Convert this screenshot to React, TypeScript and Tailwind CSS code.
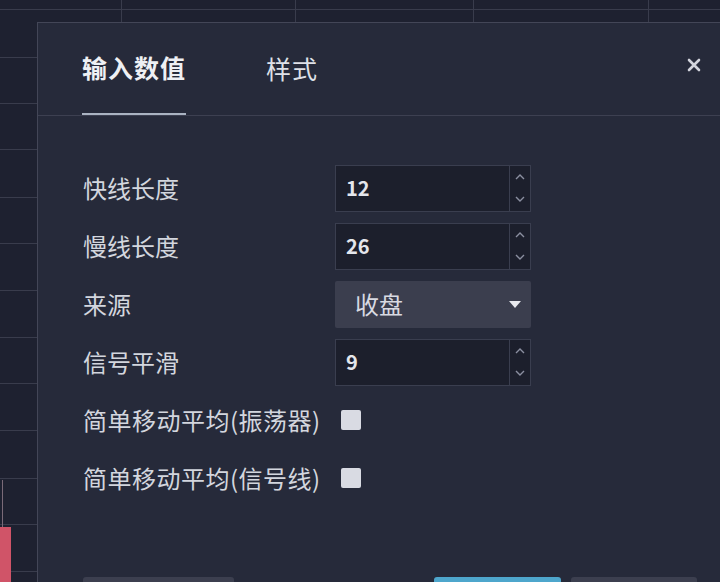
import React from "react";

const FONT = { fontFamily: '"Noto Sans CJK SC", "Noto Sans", sans-serif' };

// background chart grid (only edges show around the dialog)
const H_LINES = [9, 57, 103, 149, 197, 243, 290, 337, 383, 430, 478, 524, 571];
const V_LINES = [121, 295, 473, 648];

function Spinner() {
  return (
    <div className="flex w-[21px] flex-col border-l border-[#3a3e4f]">
      <div className="flex flex-1 items-center justify-center">
        <svg width="10" height="6" viewBox="0 0 10 6" fill="none">
          <path d="M1 5l4-4 4 4" stroke="#8b8fa0" strokeWidth="1.4" />
        </svg>
      </div>
      <div className="flex flex-1 items-center justify-center">
        <svg width="10" height="6" viewBox="0 0 10 6" fill="none">
          <path d="M1 1l4 4 4-4" stroke="#8b8fa0" strokeWidth="1.4" />
        </svg>
      </div>
    </div>
  );
}

function NumberField({ value }: { value: string }) {
  return (
    <div className="flex h-[47px] w-[196px] border border-[#3a3e4f] bg-[#1c1f2c]">
      <div className="flex flex-1 items-center pl-[10px] text-[20px] font-semibold text-[#e4e6ec]">
        {value}
      </div>
      <Spinner />
    </div>
  );
}

function SelectField({ value }: { value: string }) {
  return (
    <div className="flex h-[47px] w-[196px] items-center justify-between rounded-[2px] bg-[#3b3e4e] pl-[20px] pr-[10px]">
      <span className="text-[24px] text-[#d8dae2]">{value}</span>
      <svg width="12" height="7" viewBox="0 0 12 7">
        <path d="M0 0h12L6 7z" fill="#e8e9ee" />
      </svg>
    </div>
  );
}

function Row({ label, children }: { label: string; children: React.ReactNode }) {
  return (
    <div className="flex h-[46px] items-center">
      <div className="w-[252px] text-[24px] text-[#d3d6de]">{label}</div>
      {children}
    </div>
  );
}

function CheckRow({ label }: { label: string }) {
  return (
    <div className="flex h-[46px] items-center gap-[20px]">
      <span className="text-[24px] tracking-[0.5px] text-[#d3d6de]">{label}</span>
      <span className="h-[20px] w-[20px] rounded-[2px] bg-[#d9dbe3]" />
    </div>
  );
}

export default function App() {
  return (
    <div className="relative h-[582px] w-[720px] overflow-hidden bg-[#1e2130]" style={FONT}>
      {H_LINES.map((y) => (
        <div key={y} className="absolute left-0 right-0 h-px bg-[#393c4c]" style={{ top: y }} />
      ))}
      {V_LINES.map((x) => (
        <div key={x} className="absolute top-0 bottom-0 w-px bg-[#393c4c]" style={{ left: x }} />
      ))}
      {/* red candle at the left edge */}
      <div className="absolute left-[2px] top-[480px] h-[50px] w-px bg-[#7a6a78]" />
      <div className="absolute left-0 top-[527px] h-[60px] w-[11px] bg-[#d05468]" />

      {/* dialog */}
      <div className="absolute left-[37px] top-[22px] h-[600px] w-[720px] border-l border-t border-[#434657] bg-[#262a3a]">
        <div className="relative flex h-[93px] items-end border-b border-[#3d4051] pl-[44px]">
          <div className="flex h-full flex-col justify-center border-b-2 border-[#aab3c2]">
            <span className="text-[25px] font-bold tracking-[1px] text-[#eef0f4]">输入数值</span>
          </div>
          <div className="ml-[80px] flex h-full flex-col justify-center">
            <span className="text-[25px] tracking-[1px] text-[#dfe1e8]">样式</span>
          </div>
          <svg
            className="absolute left-[649px] top-[35px]"
            width="14"
            height="14"
            viewBox="0 0 14 14"
          >
            <path d="M2 2l10 10M12 2L2 12" stroke="#d2d4dc" strokeWidth="2.6" strokeLinecap="round" />
          </svg>
        </div>

        <div className="flex flex-col gap-[12px] pl-[45px] pt-[49px]">
          <Row label="快线长度">
            <NumberField value="12" />
          </Row>
          <Row label="慢线长度">
            <NumberField value="26" />
          </Row>
          <Row label="来源">
            <SelectField value="收盘" />
          </Row>
          <Row label="信号平滑">
            <NumberField value="9" />
          </Row>
          <CheckRow label="简单移动平均(振荡器)" />
          <CheckRow label="简单移动平均(信号线)" />
        </div>

        <div className="mt-[76px] flex pl-[45px]">
          <div className="h-[40px] w-[151px] rounded-[3px] bg-[#3c3f4f]" />
          <div className="ml-[200px] h-[40px] w-[127px] rounded-[3px] bg-[#4ea6cc]" />
          <div className="ml-[10px] h-[40px] w-[126px] rounded-[3px] bg-[#3c3f4f]" />
        </div>
      </div>
    </div>
  );
}
